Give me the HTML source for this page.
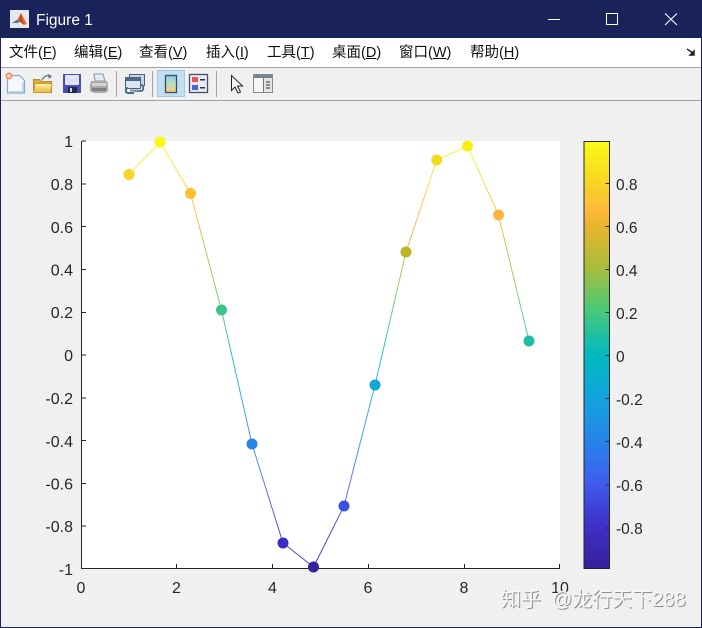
<!DOCTYPE html>
<html lang="zh"><head><meta charset="utf-8"><title>Figure 1</title>
<style>
html,body{margin:0;padding:0;background:#f0f0f0}
body{position:relative;width:702px;height:628px;overflow:hidden;font-family:"Liberation Sans","Noto Sans CJK SC",sans-serif}
svg{position:absolute;left:0;top:0}
.m{position:absolute;top:44px;font-size:14.5px;line-height:18px;color:#111;white-space:nowrap}
.m u{text-underline-offset:1px}
</style></head>
<body>
<svg width="702" height="628" viewBox="0 0 702 628" xmlns="http://www.w3.org/2000/svg" font-family="'Liberation Sans','Noto Sans CJK SC',sans-serif">
<defs>
<linearGradient id="p" gradientUnits="userSpaceOnUse" x1="0" y1="141" x2="0" y2="568">
<stop offset="0" stop-color="#f9fb15"/><stop offset=".1" stop-color="#f8d425"/><stop offset=".165" stop-color="#feb93a"/><stop offset=".2" stop-color="#e8b42e"/><stop offset=".3" stop-color="#a5be3c"/><stop offset=".4" stop-color="#45c97c"/><stop offset=".5" stop-color="#03b9be"/><stop offset=".6" stop-color="#10a4dc"/><stop offset=".7" stop-color="#2785ea"/><stop offset=".8" stop-color="#3f5cee"/><stop offset=".9" stop-color="#3f30c8"/><stop offset="1" stop-color="#35209a"/>
</linearGradient>
<linearGradient id="cb" x1="0" y1="0" x2="0" y2="1"><stop offset="0" stop-color="#8ec8f0"/><stop offset=".5" stop-color="#bfe0c0"/><stop offset="1" stop-color="#f6c878"/></linearGradient>
<linearGradient id="fo" x1="0" y1="0" x2="0" y2="1"><stop offset="0" stop-color="#fff3b0"/><stop offset="1" stop-color="#e8b83c"/></linearGradient>
<filter id="s" x="-5%" y="-5%" width="110%" height="110%"><feGaussianBlur stdDeviation="0.35"/></filter>
</defs>

<!-- window -->
<rect width="702" height="628" fill="#1a2359"/>
<rect x="1" y="38" width="700" height="589" fill="#f0f0f0"/>
<rect x="1" y="38" width="700" height="29" fill="#fff"/>
<rect x="1" y="67" width="700" height="1" fill="#a0a0a0"/>
<rect x="1" y="100" width="700" height="1" fill="#a0a0a0"/>

<!-- title icon -->
<g filter="url(#s)">
<rect x="10" y="10" width="19" height="18" fill="#e6e8f0"/>
<path d="M12 23l5-3 4-7 6 11-3 1-3-4-3 0z" fill="#e8752a"/>
<path d="M12 23l5-3 3 2-3 1z" fill="#3f6fa8"/>
<path d="M21 13l-2 8 5 4z" fill="#c9401c"/>
</g>
<text x="36" y="25" font-size="15.5" fill="#fff">Figure 1</text>

<!-- window buttons -->
<rect x="548" y="19" width="12" height="1" fill="#fff"/>
<rect x="606.5" y="13.5" width="11" height="11" fill="none" stroke="#fff"/>
<path d="M665 13.5l12 11.5M677 13.5l-12 11.5" stroke="#fff" stroke-width="1.1" fill="none"/>

<!-- menu arrow -->
<path d="M687 49l6 4M690 55h4v-4z" stroke="#222" stroke-width="1.4" fill="#222"/>

<g filter="url(#s)">
<!-- new -->
<path d="M7.500 75.500h12l5 5v12.500h-17z" fill="#f4f8fe" stroke="#8aa8cc" stroke-width="1.200"/>
<path d="M9 92h14v-10" fill="none" stroke="#b0cbe8" stroke-width="1.500"/>
<circle cx="9" cy="76" r="3.500" fill="#f0905c"/><rect x="7.500" y="74.500" width="3" height="3" fill="#fbe8d8"/>
<!-- open -->
<path d="M33.500 79.500h6l2 2h10v11h-18z" fill="#d9ae42" stroke="#b58c2c"/>
<path d="M33.500 92.500l1.500-9h17l-1.500 9z" fill="url(#fo)" stroke="#c69a30"/>
<path d="M42 80c2-4 5-5 8-4" stroke="#6d8a8c" stroke-width="1.500" fill="none"/><path d="M48 74l4 2-3 3z" fill="#56777c"/>
<!-- save -->
<rect x="63" y="74" width="18" height="19" fill="#4a4fae"/>
<rect x="65" y="75" width="14" height="10" fill="#dfe3f6"/>
<rect x="68" y="87" width="9" height="6" fill="#20264c"/><rect x="70" y="88" width="2" height="4" fill="#cfd6ea"/>
<!-- print -->
<path d="M94 74h9l2 7h-10z" fill="#e4eaf0" stroke="#8b96a0"/>
<path d="M91 81h16l1 4v6l-3 2H94l-4-2v-6z" fill="#a8a8a8"/>
<path d="M92 83h14v3H92z" fill="#d4d4d4"/><path d="M92 88h14v3H92z" fill="#7e7e7e"/>
<!-- print preview -->
<rect x="129.500" y="74.500" width="15" height="11" fill="#c8d4e2" stroke="#4a6380"/>
<rect x="125.500" y="77.500" width="15" height="11" fill="#dde6f0" stroke="#4a6380"/>
<rect x="126" y="78" width="14" height="3" fill="#486a8c"/>
<path d="M128 88c-3 0-3 5 0 5h6M141 85c3 0 3 6 0 6h-7" fill="none" stroke="#4c6e88" stroke-width="2"/>
<path d="M130 90.500h9" stroke="#7e98ac" stroke-width="2"/>
<!-- active colorbar button -->
<rect x="157.500" y="70.500" width="27" height="26" fill="#c2def3" stroke="#a4c8e4"/>
<rect x="165.500" y="75.500" width="11" height="17" fill="url(#cb)" stroke="#3b4c68" stroke-width="1.300"/>
<!-- legend -->
<rect x="189.500" y="74.500" width="18" height="18" fill="#e8ecf6" stroke="#44506e" stroke-width="1.300"/>
<rect x="192" y="77" width="6" height="5" fill="#e8525a"/><rect x="192" y="85" width="6" height="5" fill="#4468cc"/>
<rect x="200" y="79" width="5" height="1.500" fill="#333"/><rect x="200" y="87" width="5" height="1.500" fill="#333"/>
<!-- cursor -->
<path d="M231.500 75.500v15l3.500-3.500 3 6 2.500-1-3-6h5z" fill="#fff" stroke="#222"/>
<!-- panel -->
<rect x="253.500" y="74.500" width="19" height="18" fill="#e4e4e4" stroke="#8a8a8a"/>
<rect x="254" y="75" width="18" height="3" fill="#74848f"/>
<rect x="254" y="78" width="9" height="14" fill="#f6f6f6"/>
<path d="M263.500 78v14" stroke="#777"/>
<path d="M266 82h4M266 85h4M266 88h4" stroke="#555" stroke-width="1.200"/>
</g>
<rect x="116" y="71" width="1" height="26" fill="#a4a4a4"/>
<rect x="152" y="71" width="1" height="26" fill="#a4a4a4"/>
<rect x="216" y="71" width="1" height="26" fill="#a4a4a4"/>

<!-- plot -->
<rect x="81.500" y="141" width="478.500" height="427" fill="#fff"/>
<path d="M81.500 141V568.500H560" fill="none" stroke="#262626" stroke-width="1"/>
<path d="M82 141h4M82 184h4M82 226.500h4M82 269.500h4M82 312.500h4M82 355h4M82 398h4M82 440.500h4M82 483.500h4M82 526h4M176.500 568v-4M272.500 568v-4M368.500 568v-4M464.500 568v-4M559.500 568v-4" stroke="#262626" stroke-width="1" fill="none"/>
<g font-size="16" fill="#262626" text-anchor="end">
<text x="73" y="147">1</text><text x="73" y="190">0.8</text><text x="73" y="233">0.6</text><text x="73" y="275.500">0.4</text><text x="73" y="318">0.2</text><text x="73" y="361">0</text><text x="73" y="404">-0.2</text><text x="73" y="447">-0.4</text><text x="73" y="489.500">-0.6</text><text x="73" y="532">-0.8</text><text x="73" y="575">-1</text>
</g>
<g font-size="16" fill="#262626" text-anchor="middle">
<text x="81" y="593">0</text><text x="176.500" y="593">2</text><text x="272.500" y="593">4</text><text x="368" y="593">6</text><text x="464" y="593">8</text><text x="560" y="593">10</text>
</g>

<polyline points="129,174.500 160,142 190.500,193.500 221.500,310 252,444 283,543 313.500,567 344,506 375,385 406,252 436.700,160 467.500,146 498.500,215 529,341" fill="none" stroke="url(#p)" stroke-width="1" stroke-opacity=".85"/>
<g>
<circle cx="129" cy="174.500" r="5.500" fill="#f7d428"/>
<circle cx="160" cy="142" r="5.500" fill="#f9f90f"/>
<circle cx="190.500" cy="193.500" r="5.500" fill="#fcc030"/>
<circle cx="221.500" cy="310" r="5.500" fill="#3cc587"/>
<circle cx="252" cy="444" r="5.500" fill="#2a85ea"/>
<circle cx="283" cy="543" r="5.500" fill="#3a2cc6"/>
<circle cx="313.500" cy="567" r="5.500" fill="#35219a"/>
<circle cx="344" cy="506" r="5.500" fill="#3a50e2"/>
<circle cx="375" cy="385" r="5.500" fill="#10a8d8"/>
<circle cx="406" cy="252" r="5.500" fill="#bdb522"/>
<circle cx="436.700" cy="160" r="5.500" fill="#f2dc1e"/>
<circle cx="467.500" cy="146" r="5.500" fill="#f8ee14"/>
<circle cx="498.500" cy="215" r="5.500" fill="#fcb43c"/>
<circle cx="529" cy="341" r="5.500" fill="#22bba6"/>
</g>

<!-- colorbar -->
<rect x="584" y="141.500" width="25.500" height="427" fill="url(#p)" stroke="#262626" stroke-width="1"/>
<path d="M605.500 183.500h4M605.500 226.500h4M605.500 269.500h4M605.500 312.500h4M605.500 355.500h4M605.500 398.500h4M605.500 441.500h4M605.500 485h4M605.500 528h4" stroke="#262626" fill="none"/>
<g font-size="15.500" fill="#262626">
<text x="616" y="190">0.8</text><text x="616" y="233">0.6</text><text x="616" y="276">0.4</text><text x="616" y="319">0.2</text><text x="616" y="362">0</text><text x="616" y="405">-0.2</text><text x="616" y="448">-0.4</text><text x="616" y="491">-0.6</text><text x="616" y="534">-0.8</text>
</g>

<!-- watermark -->
<g font-size="20" font-family="'Liberation Sans','Noto Sans CJK SC',sans-serif">
<text x="502" y="607" fill="#8f8f8f">知乎</text><text x="553" y="607" fill="#8f8f8f">@龙行天下288</text>
<text x="501" y="606" fill="#f7f7f7">知乎</text><text x="552" y="606" fill="#f7f7f7">@龙行天下288</text>
</g>
</svg>

<span class="m" style="left:9px">文件(<u>F</u>)</span>
<span class="m" style="left:74px">编辑(<u>E</u>)</span>
<span class="m" style="left:139px">查看(<u>V</u>)</span>
<span class="m" style="left:206px">插入(<u>I</u>)</span>
<span class="m" style="left:267px">工具(<u>T</u>)</span>
<span class="m" style="left:332px">桌面(<u>D</u>)</span>
<span class="m" style="left:399px">窗口(<u>W</u>)</span>
<span class="m" style="left:470px">帮助(<u>H</u>)</span>
</body></html>
